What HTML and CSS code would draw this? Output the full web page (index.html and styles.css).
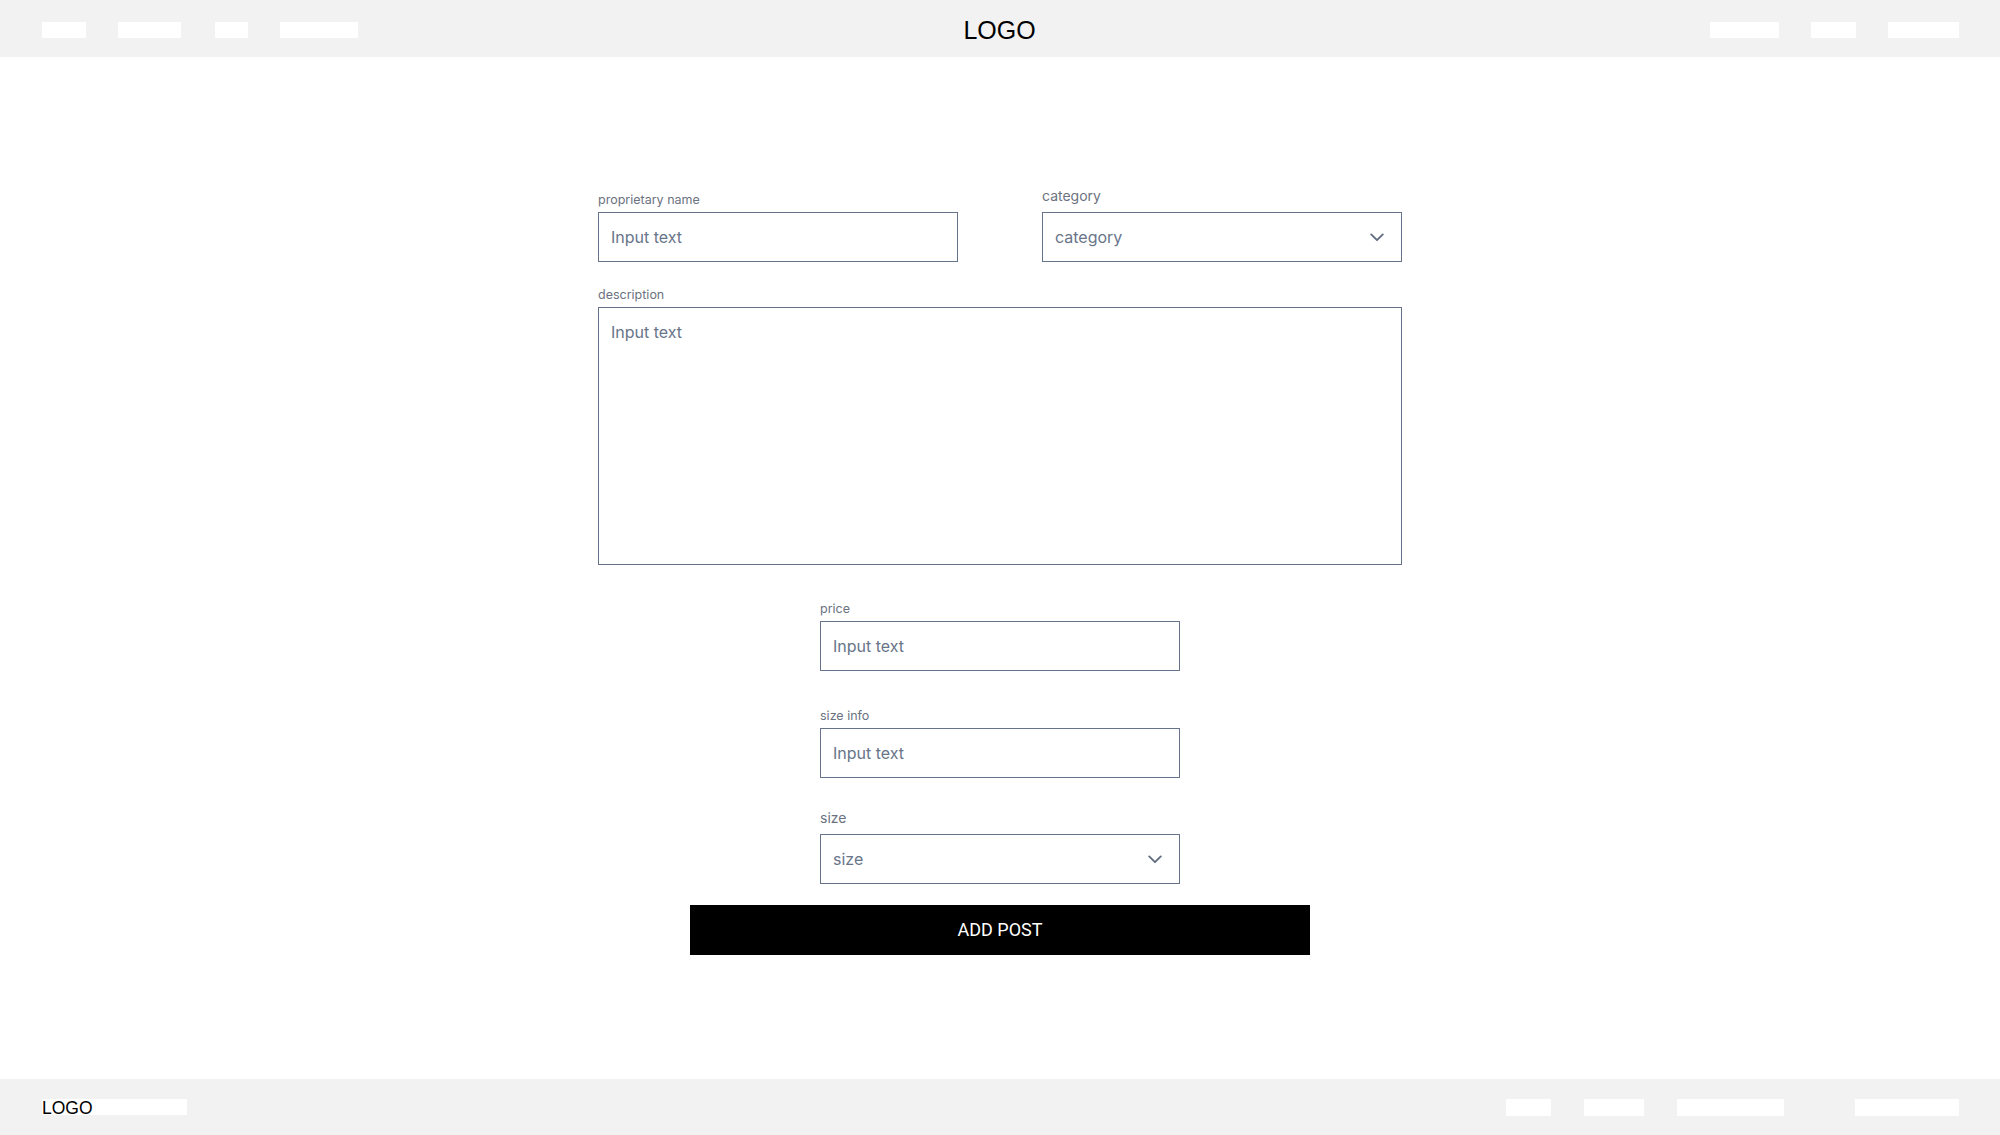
FILE: index.html
```html
<!DOCTYPE html>
<html lang="en">
<head>
<meta charset="utf-8">
<title>Add post</title>
<link rel="stylesheet" href="styles.css">
</head>
<body>
<header class="site-header">
  <nav class="nav nav-left">
    <span class="ph ph-a"></span>
    <span class="ph ph-b"></span>
    <span class="ph ph-c"></span>
    <span class="ph ph-d"></span>
  </nav>
  <div class="logo">LOGO</div>
  <nav class="nav nav-right">
    <span class="ph ph-e"></span>
    <span class="ph ph-f"></span>
    <span class="ph ph-g"></span>
  </nav>
</header>

<main class="main">
  <form class="post-form">
    <div class="row-two">
      <div class="field">
        <label class="label label-sm">proprietary name</label>
        <input class="control" type="text" placeholder="Input text">
      </div>
      <div class="field">
        <label class="label label-md">category</label>
        <div class="control select">
          <span class="select-value">category</span>
          <svg class="chev" width="14" height="9" viewBox="0 0 14 9"><path d="M1.2 1.4 7 7.2l5.8-5.8" fill="none" stroke="#5f6b7e" stroke-width="1.8" stroke-linecap="round" stroke-linejoin="round"/></svg>
        </div>
      </div>
    </div>

    <div class="field field-desc">
      <label class="label label-sm">description</label>
      <textarea class="control textarea" placeholder="Input text"></textarea>
    </div>

    <div class="narrow">
      <div class="field field-price">
        <label class="label label-sm">price</label>
        <input class="control" type="text" placeholder="Input text">
      </div>
      <div class="field field-sizeinfo">
        <label class="label label-sm">size info</label>
        <input class="control" type="text" placeholder="Input text">
      </div>
      <div class="field field-size">
        <label class="label label-md">size</label>
        <div class="control select">
          <span class="select-value">size</span>
          <svg class="chev" width="14" height="9" viewBox="0 0 14 9"><path d="M1.2 1.4 7 7.2l5.8-5.8" fill="none" stroke="#5f6b7e" stroke-width="1.8" stroke-linecap="round" stroke-linejoin="round"/></svg>
        </div>
      </div>
    </div>

    <button class="submit" type="button">ADD POST</button>
  </form>
</main>

<footer class="site-footer">
  <div class="foot-left">
    <span class="foot-logo">LOGO</span>
  </div>
  <nav class="nav nav-foot">
    <span class="ph fh-a"></span>
    <span class="ph fh-b"></span>
    <span class="ph fh-c"></span>
    <span class="ph fh-d"></span>
  </nav>
</footer>
</body>
</html>
```

FILE: styles.css
```css
* { box-sizing: border-box; }

html, body {
  margin: 0;
  padding: 0;
  background: #ffffff;
}

body {
  min-height: 100vh;
  display: flex;
  flex-direction: column;
  font-family: Inter, "Noto Sans", sans-serif;
}

/* header */
.site-header {
  height: 57px;
  background: #f2f2f2;
  display: grid;
  grid-template-columns: 1fr auto 1fr;
  align-items: center;
  padding: 0 41px 0 42px;
}

.nav {
  display: flex;
  align-items: center;
}

.nav-right { justify-content: flex-end; }

.ph {
  display: block;
  background: #ffffff;
  height: 16px;
}

.ph-a { width: 44px; }
.ph-b { width: 63px; margin-left: 32px; }
.ph-c { width: 33px; margin-left: 34px; }
.ph-d { width: 78px; margin-left: 32px; }

.ph-e { width: 69px; }
.ph-f { width: 45px; margin-left: 32px; }
.ph-g { width: 71px; margin-left: 32px; }

.logo {
  font-family: "Liberation Sans", Arial, sans-serif;
  font-size: 25px;
  color: #000;
  line-height: 57px;
  padding-top: 2px;
  margin-left: -2px;
}

/* main */
.main {
  flex: 1;
  padding-top: 130px;
}

.post-form {
  width: 804px;
  margin: 0 auto;
  display: flex;
  flex-direction: column;
}

.row-two {
  display: flex;
  align-items: flex-end;
  justify-content: space-between;
}

.row-two .field { width: 360px; }

.field {
  display: flex;
  flex-direction: column;
}

.label {
  color: #6b7280;
  font-family: Inter, sans-serif;
}

.label-sm {
  font-size: 12.5px;
  line-height: 16px;
  margin-bottom: 4px;
}

.label-md {
  font-size: 14px;
  line-height: 18px;
  margin-bottom: 7px;
}

.control {
  width: 100%;
  height: 50px;
  border: 1px solid #677388;
  background: #fff;
  border-radius: 0;
  padding: 0 12px;
  font-family: Inter, sans-serif;
  font-size: 16px;
  color: #687589;
  outline: none;
  margin: 0;
}

.control::placeholder {
  color: #687589;
  opacity: 1;
}

.select {
  display: flex;
  align-items: center;
  justify-content: space-between;
  padding-right: 17px;
}

.chev { display: block; }

.field-desc { margin-top: 25px; }

.textarea {
  height: 258px;
  padding: 12px 12px;
  line-height: 24px;
  resize: none;
  display: block;
}

.narrow {
  width: 360px;
  margin: 0 auto;
  display: flex;
  flex-direction: column;
}

.field-price { margin-top: 36px; }
.field-sizeinfo { margin-top: 37px; }
.field-size { margin-top: 31px; }

.submit {
  width: 620px;
  height: 50px;
  margin: 21px auto 0;
  background: #000;
  color: #fff;
  border: 0;
  border-radius: 0;
  font-family: Roboto, "Liberation Sans", sans-serif;
  font-size: 18px;
  padding: 0 0 2px;
  cursor: pointer;
}

/* footer */
.site-footer {
  height: 56px;
  background: #f2f2f2;
  display: flex;
  align-items: center;
  justify-content: space-between;
  padding: 0 41px 0 42px;
}

.foot-left {
  width: 145px;
  height: 16px;
  background: #ffffff;
  display: flex;
  align-items: center;
}

.foot-logo {
  font-family: "Liberation Sans", Arial, sans-serif;
  font-size: 17.5px;
  line-height: 16px;
  color: #000;
  padding-top: 2px;
}

.nav-foot .ph { height: 17px; }
.fh-a { width: 45px; }
.fh-b { width: 60px; margin-left: 33px; }
.fh-c { width: 107px; margin-left: 33px; }
.fh-d { width: 104px; margin-left: 71px; }
```
